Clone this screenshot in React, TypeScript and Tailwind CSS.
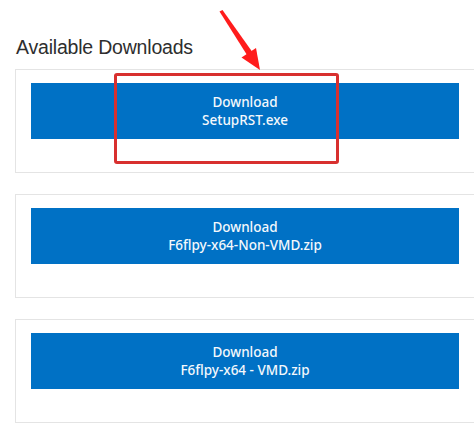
const downloads = ["SetupRST.exe", "F6flpy-x64-Non-VMD.zip", "F6flpy-x64 - VMD.zip"];

const DownloadCard: React.FC<{ file: string }> = ({ file }) => {
  return (
    <div className="w-[480px] h-[104px] border border-[#e4e4e4] bg-white pt-[13px] pl-[15px]">
      <button
        className="w-[428px] h-[56px] bg-[#0071c5] text-[#f4f8fc] text-[13.5px] leading-[18px] font-medium flex flex-col items-center justify-center"
        style={{ fontFamily: '"Noto Sans", "Open Sans", sans-serif' }}
      >
        <span>Download</span>
        <span>{file}</span>
      </button>
    </div>
  );
};

export default function App() {
  return (
    <div
      className="relative w-[474px] h-[424px] overflow-hidden bg-white"
      style={{ fontFamily: '"Liberation Sans", Arial, sans-serif' }}
    >
      <div className="pl-[16px] pt-[35px]">
        <h2 className="text-[19.5px] leading-[24px] text-[#2e2e2e] tracking-[-0.2px]">
          Available Downloads
        </h2>
      </div>
      <div className="flex flex-col gap-[21px] pl-[15px] mt-[10px]">
        {downloads.map((f) => (
          <DownloadCard key={f} file={f} />
        ))}
      </div>

      {/* annotation overlay */}
      <div className="absolute left-[114px] top-[73px] w-[225px] h-[91px] border-[3px] border-[#d8302f] rounded-[3px]" />
      <svg className="absolute left-0 top-0" width="474" height="100" viewBox="0 0 474 100">
        <polygon points="219.5,11.5 222.5,10 252,51.5 247,55" fill="#ff1c1c" />
        <polygon points="260,70 256,48 241.5,57.5" fill="#ff1c1c" />
      </svg>
    </div>
  );
}
